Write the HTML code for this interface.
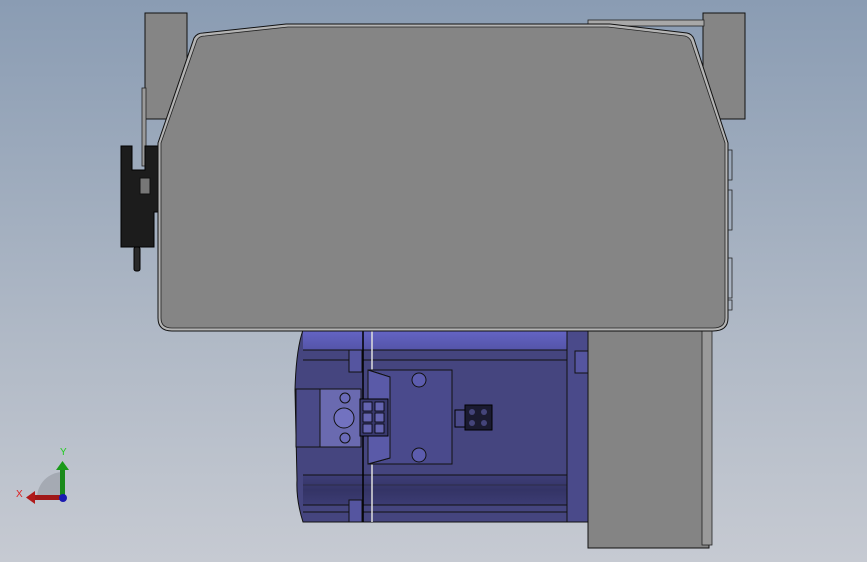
<!DOCTYPE html>
<html><head><meta charset="utf-8"><style>
html,body{margin:0;padding:0;width:867px;height:562px;overflow:hidden}
svg{display:block}
</style></head><body>
<svg width="867" height="562" viewBox="0 0 867 562" xmlns="http://www.w3.org/2000/svg">
<defs>
<linearGradient id="bg" x1="0" y1="0" x2="0" y2="1">
<stop offset="0" stop-color="#8a9cb3"/><stop offset="0.6" stop-color="#b0b9c6"/><stop offset="1" stop-color="#c6cad2"/>
</linearGradient>
<linearGradient id="top" x1="0" y1="0" x2="0" y2="1">
<stop offset="0" stop-color="#6464c4"/><stop offset="1" stop-color="#5454a8"/>
</linearGradient>
<linearGradient id="low" x1="0" y1="0" x2="0" y2="1">
<stop offset="0" stop-color="#3e3e78"/><stop offset="0.5" stop-color="#343466"/><stop offset="1" stop-color="#3c3c74"/>
</linearGradient>
</defs>
<rect width="867" height="562" fill="url(#bg)"/>

<rect x="145" y="13" width="42" height="106" fill="#858585" stroke="#111" stroke-width="1"/>
<rect x="703" y="13" width="42" height="106" fill="#858585" stroke="#111" stroke-width="1"/>
<rect x="588" y="20" width="116" height="6" fill="#a8a8a8" stroke="#222" stroke-width="0.8"/>
<rect x="142" y="88" width="4" height="78" fill="#9a9a9a" stroke="#222" stroke-width="0.8"/>

<path d="M121 146 H132 V170 H145 V146 H158 V212 H154 V247 H121 Z" fill="#1c1c1c" stroke="#000"/>
<rect x="140" y="178" width="10" height="16" fill="#777" stroke="#111"/>
<rect x="134" y="247" width="6" height="24" rx="2" fill="#2a2a2a" stroke="#000"/>

<rect x="588" y="330" width="121" height="218" fill="#848484" stroke="#111"/>
<rect x="702" y="330" width="10" height="215" fill="#9a9a9a" stroke="#222" stroke-width="0.8"/>

<path d="M303 330 H588 V522 H303 Q296 500 297 480 L295 390 Q296 350 303 330 Z" fill="#45457f" stroke="#111"/>
<rect x="303" y="331" width="264" height="19" fill="url(#top)"/>
<rect x="303" y="475" width="264" height="30" fill="url(#low)"/>
<line x1="303" y1="350" x2="567" y2="350" stroke="#111"/>
<line x1="303" y1="360" x2="567" y2="360" stroke="#111"/>
<line x1="303" y1="475" x2="567" y2="475" stroke="#111"/>
<line x1="303" y1="485" x2="567" y2="485" stroke="#222" stroke-width="0.6"/>
<line x1="303" y1="505" x2="567" y2="505" stroke="#111"/>
<line x1="303" y1="512" x2="567" y2="512" stroke="#111"/>
<rect x="567" y="330" width="21" height="192" fill="#4a4a8a" stroke="#111"/>
<line x1="363" y1="330" x2="363" y2="522" stroke="#000" stroke-width="1.5"/>
<line x1="372" y1="330" x2="372" y2="522" stroke="#ddd" stroke-width="1.5"/>
<rect x="349" y="350" width="13" height="22" fill="#5555a0" stroke="#111"/>
<rect x="349" y="500" width="13" height="22" fill="#5555a0" stroke="#111"/>
<rect x="575" y="351" width="13" height="22" fill="#5555a0" stroke="#111"/>

<rect x="296" y="389" width="65" height="58" fill="#4a4a88" stroke="#111"/>
<rect x="320" y="389" width="41" height="58" fill="#6a6ab0" stroke="#111"/>
<circle cx="344" cy="418" r="10" fill="#7272c0" stroke="#111"/>
<circle cx="345" cy="398" r="5" fill="#6a6ab8" stroke="#111"/>
<circle cx="345" cy="438" r="5" fill="#6a6ab8" stroke="#111"/>

<path d="M368 370 H452 V464 H368 L390 458 V377 Z" fill="#4a4a8c" stroke="#111"/>
<path d="M368 370 L390 377 V458 L368 464 Z" fill="#5a5aa8" stroke="#111"/>
<circle cx="419" cy="380" r="7" fill="#5c5cae" stroke="#111"/>
<circle cx="419" cy="455" r="7" fill="#5c5cae" stroke="#111"/>

<rect x="360" y="399" width="28" height="37" fill="#3a3a70" stroke="#000"/>
<g fill="#6464b0" stroke="#000" stroke-width="0.8">
<rect x="363" y="402" width="9" height="9"/><rect x="375" y="402" width="9" height="9"/>
<rect x="363" y="413" width="9" height="9"/><rect x="375" y="413" width="9" height="9"/>
<rect x="363" y="424" width="9" height="9"/><rect x="375" y="424" width="9" height="9"/>
</g>
<rect x="455" y="410" width="10" height="17" fill="#4a4a88" stroke="#000"/>
<rect x="465" y="405" width="27" height="25" fill="#1a1a30" stroke="#000"/>
<g fill="#44447a"><circle cx="472" cy="412" r="3"/><circle cx="484" cy="412" r="3"/><circle cx="472" cy="423" r="3"/><circle cx="484" cy="423" r="3"/></g>

<path d="M158 143 L194 38 Q197 33 203 33 L286 24 H610 L687 33 Q692 34 694 39 L728 143 V318 Q728 331 713 331 H172 Q158 331 158 318 Z" fill="#b4b4b4" stroke="#111" stroke-width="1"/>
<path d="M161 143 L197 40 Q199 36 205 36 L288 27 H608 L685 36 Q689 37 691 41 L725 143 V318 Q725 328 713 328 H172 Q161 328 161 318 Z" fill="#858585" stroke="#222" stroke-width="0.8"/>
<path d="M728 150 h4 v30 h-4 M728 190 h4 v40 h-4 M728 258 h4 v40 h-4 M728 300 h4 v10 h-4" fill="none" stroke="#222" stroke-width="0.8"/>

<path d="M63 498 L37 498 A26 26 0 0 1 63 472 Z" fill="#9aa0a8" opacity="0.7"/>
<rect x="60" y="468" width="5" height="30" fill="#1a8a1a"/>
<path d="M56 470 L62.5 461 L69 470 Z" fill="#1a9a1a"/>
<rect x="34" y="495" width="30" height="5" fill="#a01818"/>
<path d="M35 491 L26 497.5 L35 504 Z" fill="#b01a1a"/>
<circle cx="63" cy="498" r="4" fill="#1a1ab0"/>
<text x="60" y="455" font-family="Liberation Sans,sans-serif" font-size="10" fill="#22cc22">Y</text>
<text x="16" y="497" font-family="Liberation Sans,sans-serif" font-size="10" fill="#dd2222">X</text>
</svg>
</body></html>
